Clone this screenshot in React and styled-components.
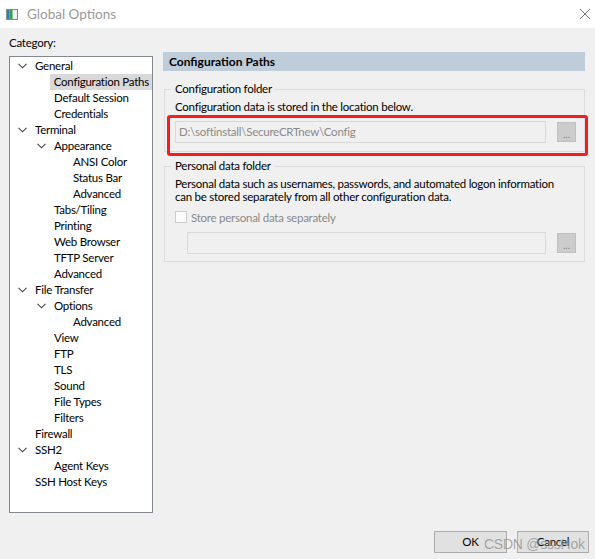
import React from 'react'
import styled, { createGlobalStyle } from 'styled-components'

const GlobalStyle = createGlobalStyle`
  html, body { margin: 0; padding: 0; }
  body {
    font-family: Lato, "Noto Sans", sans-serif;
    font-size: 11.5px;
    letter-spacing: -0.25px;
    color: #000;
    background: #f0f0f0;
  }
`

// ***** window frame *****
const Window = styled.div`
  position: relative;
  width: 595px;
  height: 559px;
  background: #f0f0f0;
  display: flex;
  flex-direction: column;
  overflow: hidden;
`
const TitleBar = styled.div`
  height: 28px;
  background: #fff;
  display: flex;
  align-items: center;
  padding-left: 6px;
  padding-right: 2px;
  box-sizing: border-box;
`
const Title = styled.span`
  flex: 1;
  margin-left: 9px;
  font-size: 13.5px;
  letter-spacing: 0;
  color: #999;
`
const CloseBtn = styled.div`
  width: 16px;
  height: 16px;
  display: flex;
  align-items: center;
  justify-content: center;
`

// ***** body *****
const Body = styled.div`
  flex: 1;
  display: flex;
  padding: 8px 10px 0 9px;
  gap: 10px;
`
const LeftCol = styled.div`
  width: 144px;
  display: flex;
  flex-direction: column;
`
const Label = styled.div`
  height: 14px;
  line-height: 14px;
  margin-bottom: 6px;
`
const Tree = styled.div`
  height: 457px;
  box-sizing: border-box;
  background: #fff;
  border: 1px solid #828790;
  padding-top: 1px;
`
const Row = styled.div`
  height: 16px;
  display: flex;
  align-items: center;
  padding-left: ${p => 6 + p.level * 19}px;
`
const Arrow = styled.span`
  width: 19px;
  height: 16px;
  display: flex;
  align-items: center;
  padding-left: 2px;
  box-sizing: border-box;
`
const ItemText = styled.span`
  height: 16px;
  line-height: 16px;
  padding: 0 3px 0 4px;
  margin-left: -4px;
  white-space: nowrap;
  background: ${p => (p.selected ? '#d9d9d9' : 'transparent')};
`

const RightCol = styled.div`
  position: relative;
  flex: 1;
  margin-top: 16px;
  display: flex;
  flex-direction: column;
`
const Header = styled.div`
  height: 19px;
  line-height: 19px;
  background: #bfcddb;
  font-size: 12px;
  letter-spacing: 0;
  font-weight: bold;
  padding-left: 6px;
`
const Group = styled.fieldset`
  margin: ${p => p.top}px 0 0 1px;
  padding: 0 8px 0 10px;
  border: 1px solid #dcdcdc;
  display: flex;
  flex-direction: column;
  min-width: 0;
`
const Legend = styled.legend`
  padding: 0 3px 0 4px;
  margin-left: -4px;
  line-height: 14px;
`
const Desc = styled.div`
  line-height: 13px;
  margin-top: ${p => p.top || 0}px;
  white-space: nowrap;
`
const FieldRow = styled.div`
  display: flex;
  align-items: center;
  margin: ${p => p.top}px 0 ${p => p.bottom}px ${p => p.indent || 0}px;
`
const PathBox = styled.div`
  flex: 1;
  height: 22px;
  box-sizing: border-box;
  border: 1px solid #d9d9d9;
  background: #f0f0f0;
  color: #8a8a8a;
  line-height: 20px;
  padding-left: 3px;
`
const DotsBtn = styled.div`
  width: 19px;
  height: 20px;
  margin-left: 11px;
  box-sizing: border-box;
  background: #cccccc;
  border: 1px solid #bfbfbf;
  color: #838383;
  font-size: 10px;
  line-height: 22px;
  text-align: center;
  letter-spacing: 0;
`
const CheckRow = styled.label`
  display: flex;
  align-items: center;
  margin-top: 7px;
  color: #8a8a8a;
  height: 14px;
`
const Check = styled.span`
  width: 12px;
  height: 12px;
  box-sizing: border-box;
  border: 1px solid #cccccc;
  background: #fcfcfc;
  margin-right: 4px;
`
const Highlight = styled.div`
  position: absolute;
  left: 4px;
  top: 63px;
  width: 421px;
  height: 41px;
  box-sizing: border-box;
  border: 3px solid #f51d1d;
  border-radius: 3px;
  pointer-events: none;
`

// ***** footer *****
const Footer = styled.div`
  height: 46px;
  display: flex;
  justify-content: flex-end;
  align-items: flex-start;
  gap: 10px;
  padding: 18px 6px 0 0;
  box-sizing: border-box;
`
const Button = styled.div`
  width: ${p => p.w}px;
  height: 22px;
  box-sizing: border-box;
  border: 1px solid #adadad;
  background: #e1e1e1;
  line-height: 20px;
  text-align: center;
`
const Watermark = styled.div`
  position: absolute;
  left: 484px;
  top: 536px;
  font-family: "Liberation Sans", Arial, sans-serif;
  font-size: 14px;
  color: rgba(140, 140, 140, 0.75);
  pointer-events: none;
`

const Chevron = () => (
  <svg width="9" height="6" viewBox="0 0 9 6">
    <path d="M0.5 0.8 L4.5 4.8 L8.5 0.8" fill="none" stroke="#444" strokeWidth="1.1" />
  </svg>
)

const AppIcon = () => (
  <svg width="12" height="11" viewBox="0 0 12 11">
    <rect x="0.5" y="0.5" width="11" height="10" fill="#e8e8e8" stroke="#8a8a8a" />
    <rect x="1" y="1" width="2.5" height="9" fill="#2f7fc0" />
    <rect x="3.5" y="1" width="3" height="9" fill="#3aa050" />
    <rect x="7" y="2" width="3.5" height="7" fill="#f4f4f4" />
  </svg>
)

const CloseIcon = () => (
  <svg width="12" height="12" viewBox="0 0 12 12">
    <path d="M1 1 L11 11 M11 1 L1 11" stroke="#777" strokeWidth="1" />
  </svg>
)

// [level, text, expanded, selected]
const tree = [
  [0, 'General', true],
  [1, 'Configuration Paths', false, true],
  [1, 'Default Session'],
  [1, 'Credentials'],
  [0, 'Terminal', true],
  [1, 'Appearance', true],
  [2, 'ANSI Color'],
  [2, 'Status Bar'],
  [2, 'Advanced'],
  [1, 'Tabs/Tiling'],
  [1, 'Printing'],
  [1, 'Web Browser'],
  [1, 'TFTP Server'],
  [1, 'Advanced'],
  [0, 'File Transfer', true],
  [1, 'Options', true],
  [2, 'Advanced'],
  [1, 'View'],
  [1, 'FTP'],
  [1, 'TLS'],
  [1, 'Sound'],
  [1, 'File Types'],
  [1, 'Filters'],
  [0, 'Firewall'],
  [0, 'SSH2', true],
  [1, 'Agent Keys'],
  [0, 'SSH Host Keys'],
]

const TreeRow = ({ level, text, open, selected }) => (
  <Row level={level}>
    <Arrow>{open && <Chevron />}</Arrow>
    <ItemText selected={selected}>{text}</ItemText>
  </Row>
)

export default function App() {
  return (
    <Window>
      <GlobalStyle />
      <TitleBar>
        <AppIcon />
        <Title>Global Options</Title>
        <CloseBtn><CloseIcon /></CloseBtn>
      </TitleBar>
      <Body>
        <LeftCol>
          <Label>Category:</Label>
          <Tree>
            {tree.map(([l, t, o, s], i) => (
              <TreeRow key={i} level={l} text={t} open={o} selected={s} />
            ))}
          </Tree>
        </LeftCol>
        <RightCol>
          <Header>Configuration Paths</Header>
          <Group top={11}>
            <Legend>Configuration folder</Legend>
            <Desc top={4}>Configuration data is stored in the location below.</Desc>
            <FieldRow top={8} bottom={8}>
              <PathBox>D:\softinstall\SecureCRTnew\Config</PathBox>
              <DotsBtn>...</DotsBtn>
            </FieldRow>
          </Group>
          <Group top={7}>
            <Legend>Personal data folder</Legend>
            <Desc top={4}>
              Personal data such as usernames, passwords, and automated logon information
              <br />
              can be stored separately from all other configuration data.
            </Desc>
            <CheckRow>
              <Check />
              Store personal data separately
            </CheckRow>
            <FieldRow top={8} bottom={7} indent={12}>
              <PathBox />
              <DotsBtn>...</DotsBtn>
            </FieldRow>
          </Group>
          <Highlight />
        </RightCol>
      </Body>
      <Footer>
        <Button w={73}>OK</Button>
        <Button w={72}>Cancel</Button>
      </Footer>
      <Watermark>CSDN @sssHok</Watermark>
    </Window>
  )
}
